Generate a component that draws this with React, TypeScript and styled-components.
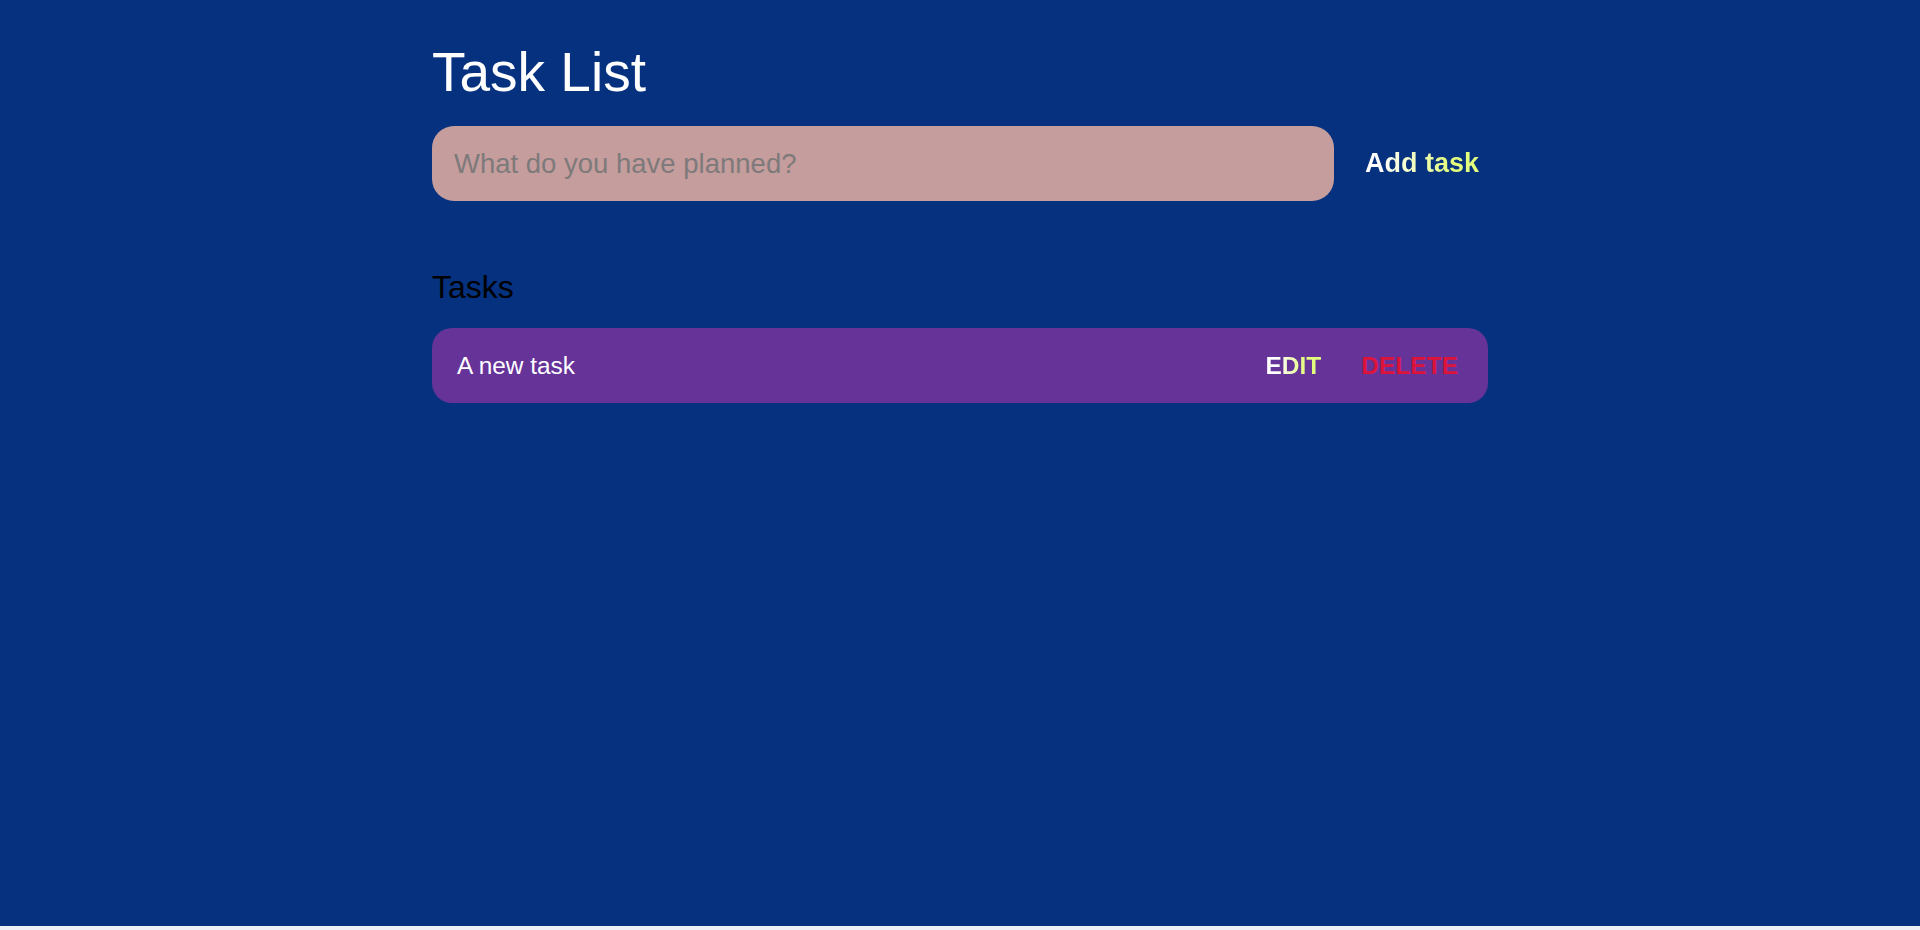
import styled, { createGlobalStyle } from "styled-components";

const GlobalStyle = createGlobalStyle`
  html, body {
    margin: 0;
    padding: 0;
    background: #eef1f6;
    font-family: "Liberation Sans", Arial, sans-serif;
  }
`;

const PageStyled = styled.div`
  background: #05317f;
  height: calc(100vh - 4px);
  box-sizing: border-box;
  padding-top: 41px;
`;

const ContainerStyled = styled.div`
  width: 55%;
  margin: 0 auto;
`;

const TitleStyled = styled.h1`
  margin: 0;
  color: #ffffff;
  font-size: 55px;
  line-height: 63px;
  font-weight: 400;
`;

const FormStyled = styled.form`
  display: flex;
  align-items: center;
  gap: 22px;
  margin-top: 22px;
`;

const InputStyled = styled.input`
  flex: 1;
  height: 75px;
  box-sizing: border-box;
  border: none;
  border-radius: 22px;
  background: #c59d9c;
  padding: 0 22px;
  font-family: "Liberation Sans", Arial, sans-serif;
  font-size: 27.5px;
  color: #222;
  outline: none;

  &::placeholder {
    color: #7e7a7b;
  }
`;

const GradientButton = styled.button<{ size?: number }>`
  border: none;
  background: linear-gradient(90deg, #ffffff 18%, #e3fd7c 72%);
  -webkit-background-clip: text;
  background-clip: text;
  color: transparent;
  font-family: "Liberation Sans", Arial, sans-serif;
  font-weight: 700;
  font-size: ${(p) => p.size ?? 24.5}px;
  padding: 0 9px;
  cursor: pointer;
`;

const EditButton = styled(GradientButton)`
  padding: 0;
`;

const SubtitleStyled = styled.h2`
  margin: 68px 0 0;
  color: #000000;
  font-size: 32px;
  line-height: 36px;
  font-weight: 400;
`;

const ListStyled = styled.div`
  display: flex;
  flex-direction: column;
  gap: 16px;
  margin-top: 23px;
`;

const TaskRowStyled = styled.div`
  display: flex;
  align-items: center;
  height: 75px;
  box-sizing: border-box;
  padding: 0 30px 0 25px;
  border-radius: 20px;
  background: #663399;
`;

const TaskNameStyled = styled.span`
  flex: 1;
  color: #ffffff;
  font-size: 24.4px;
`;

const ActionsStyled = styled.div`
  display: flex;
  align-items: center;
  gap: 40px;
`;

const DeleteButton = styled.button`
  border: none;
  background: none;
  padding: 0;
  color: #dc143c;
  font-family: "Liberation Sans", Arial, sans-serif;
  font-weight: 700;
  font-size: 24.5px;
  cursor: pointer;
`;

const tasks = [{ id: 1, name: "A new task" }];

const TaskRow = ({ name }: { name: string }) => {
  return (
    <TaskRowStyled>
      <TaskNameStyled>{name}</TaskNameStyled>
      <ActionsStyled>
        <EditButton type="button">EDIT</EditButton>
        <DeleteButton type="button">DELETE</DeleteButton>
      </ActionsStyled>
    </TaskRowStyled>
  );
};

const App = () => {
  return (
    <>
      <GlobalStyle />
      <PageStyled>
        <ContainerStyled>
          <TitleStyled>Task List</TitleStyled>
          <FormStyled onSubmit={(e) => e.preventDefault()}>
            <InputStyled placeholder="What do you have planned?" />
            <GradientButton type="submit" size={27}>
              Add task
            </GradientButton>
          </FormStyled>
          <SubtitleStyled>Tasks</SubtitleStyled>
          <ListStyled>
            {tasks.map((task) => (
              <TaskRow key={task.id} name={task.name} />
            ))}
          </ListStyled>
        </ContainerStyled>
      </PageStyled>
    </>
  );
};

export default App;
